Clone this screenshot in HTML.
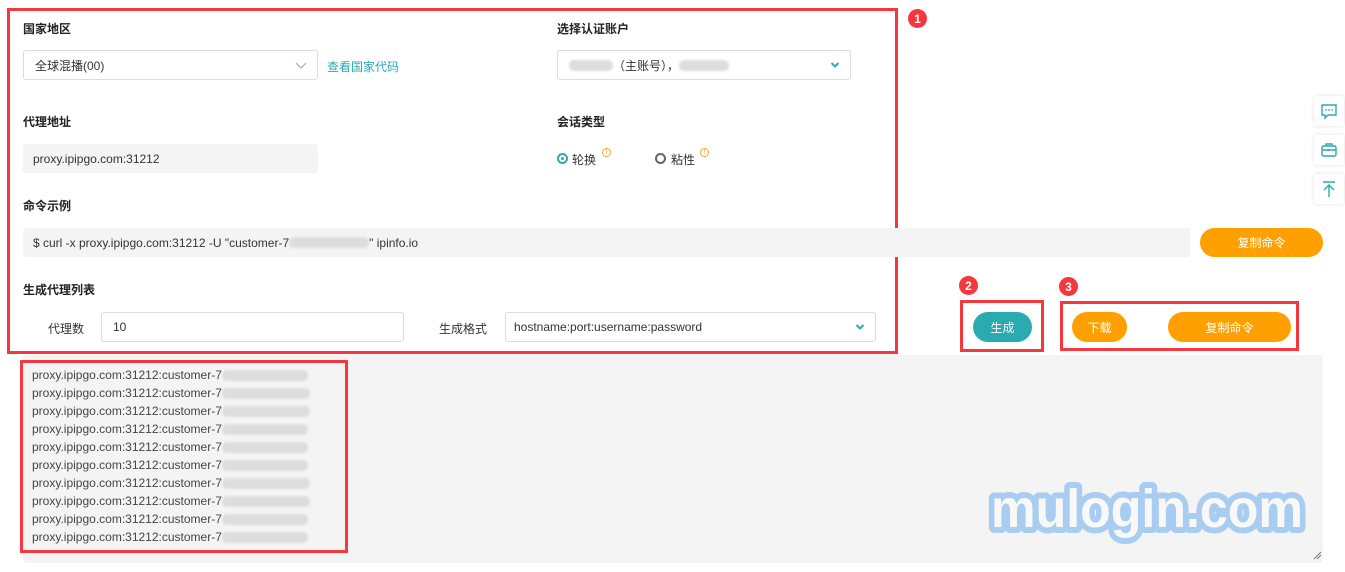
<!DOCTYPE html>
<html><head><meta charset="utf-8"><style>
*{box-sizing:border-box;margin:0;padding:0}
body{width:1345px;height:572px;background:#fff;position:relative;overflow:hidden;font-family:"Liberation Sans","Noto Sans CJK SC",sans-serif;font-size:12px;color:#333}
.a{position:absolute}
.lbl{font-weight:bold;font-size:12px;color:#222}
.field{border:1px solid #dcdcdc;border-radius:3px;background:#fff;display:flex;align-items:center;padding-left:11px}
.grey{background:#f4f4f4;border-radius:3px;display:flex;align-items:center;padding-left:10px}
.btn{border-radius:15px;color:#fff;display:flex;align-items:center;justify-content:center;font-size:12px}
.or{background:#ffa000}
.red{border:3px solid #f5383d}
.badge{width:19px;height:19px;border-radius:50%;background:#f5383d;color:#fff;font-size:12px;font-weight:bold;display:flex;align-items:center;justify-content:center}
.blur{display:inline-block;height:11px;background:#ddd;border-radius:5px;vertical-align:middle;filter:blur(1px)}
.side{left:1314px;width:30px;height:30px;background:#fff;border-radius:3px;box-shadow:0 0 4px rgba(0,0,0,.12);display:flex;align-items:center;justify-content:center}
.chev{position:absolute;right:10px;top:8px}
.line{height:18px;line-height:18px}
</style></head><body>
<div class="a red" style="left:7px;top:8px;width:891px;height:346px"></div>
<div class="a badge" style="left:908px;top:9px">1</div>

<div class="a lbl" style="left:23px;top:20px">国家地区</div>
<div class="a field" style="left:23px;top:50px;width:295px;height:30px">全球混播(00)
<svg class="chev" style="top:9px" width="12" height="10" viewBox="0 0 12 10"><path d="M1 3l5 5 5-5" fill="none" stroke="#aaa" stroke-width="1.2"/></svg></div>
<div class="a" style="left:327px;top:58px;color:#2aabb0">查看国家代码</div>

<div class="a lbl" style="left:557px;top:20px">选择认证账户</div>
<div class="a field" style="left:557px;top:50px;width:294px;height:30px"><span class="blur" style="width:44px"></span>（主账号），<span class="blur" style="width:50px"></span>
<svg class="chev" style="top:10px" width="10" height="8" viewBox="0 0 10 8"><path d="M1.5 2l3.5 3.5L8.5 2" fill="none" stroke="#2aabb0" stroke-width="2"/></svg></div>

<div class="a lbl" style="left:23px;top:113px">代理地址</div>
<div class="a grey" style="left:23px;top:144px;width:295px;height:29px">proxy.ipipgo.com:31212</div>

<div class="a lbl" style="left:557px;top:113px">会话类型</div>
<div class="a" style="left:557px;top:153px;width:11px;height:11px;border-radius:50%;border:2px solid #2aabb0;display:flex;align-items:center;justify-content:center"><div style="width:3px;height:3px;border-radius:50%;background:#2aabb0"></div></div>
<div class="a" style="left:572px;top:151px">轮换</div>
<div class="a" style="left:602px;top:148px;width:9px;height:9px;border-radius:50%;border:1px solid #f5a623;font-size:7px;color:#f5a623;text-align:center;line-height:7px">!</div>
<div class="a" style="left:655px;top:153px;width:11px;height:11px;border-radius:50%;border:2px solid #666"></div>
<div class="a" style="left:671px;top:151px">粘性</div>
<div class="a" style="left:700px;top:148px;width:9px;height:9px;border-radius:50%;border:1px solid #f5a623;font-size:7px;color:#f5a623;text-align:center;line-height:7px">!</div>

<div class="a lbl" style="left:23px;top:197px">命令示例</div>
<div class="a grey" style="left:23px;top:228px;width:1167px;height:29px">$ curl -x proxy.ipipgo.com:31212 -U "customer-7<span class="blur" style="width:80px;background:#ddd"></span>" ipinfo.io</div>
<div class="a btn or" style="left:1200px;top:228px;width:123px;height:29px">复制命令</div>

<div class="a lbl" style="left:23px;top:281px">生成代理列表</div>
<div class="a" style="left:48px;top:320px">代理数</div>
<div class="a field" style="left:101px;top:312px;width:303px;height:30px">10</div>
<div class="a" style="left:439px;top:320px">生成格式</div>
<div class="a field" style="left:505px;top:312px;width:371px;height:30px;padding-left:8px">hostname:port:username:password
<svg class="chev" style="top:10px" width="10" height="8" viewBox="0 0 10 8"><path d="M1.5 2l3.5 3.5L8.5 2" fill="none" stroke="#2aabb0" stroke-width="2"/></svg></div>

<div class="a badge" style="left:959px;top:276px">2</div>
<div class="a red" style="left:960px;top:300px;width:84px;height:52px"></div>
<div class="a btn" style="left:973px;top:312px;width:59px;height:30px;background:#2aabb0">生成</div>

<div class="a badge" style="left:1059px;top:277px">3</div>
<div class="a red" style="left:1060px;top:301px;width:239px;height:50px"></div>
<div class="a btn or" style="left:1072px;top:312px;width:55px;height:30px">下载</div>
<div class="a btn or" style="left:1168px;top:312px;width:123px;height:30px">复制命令</div>

<div class="a" style="left:23px;top:355px;width:1300px;height:208px;background:#f4f4f4;border-radius:4px"></div>
<svg class="a" style="left:1312px;top:550px" width="10" height="10"><path d="M2 9L9 2M5 9L9 5" stroke="#777" stroke-width="1"/></svg>
<div class="a red" style="left:20px;top:360px;width:328px;height:193px"></div>
<div class="a" style="left:32px;top:366px;color:#444">
<div class="line">proxy.ipipgo.com:31212:customer-7<span class="blur" style="width:86px"></span></div>
<div class="line">proxy.ipipgo.com:31212:customer-7<span class="blur" style="width:88px"></span></div>
<div class="line">proxy.ipipgo.com:31212:customer-7<span class="blur" style="width:88px"></span></div>
<div class="line">proxy.ipipgo.com:31212:customer-7<span class="blur" style="width:86px"></span></div>
<div class="line">proxy.ipipgo.com:31212:customer-7<span class="blur" style="width:86px"></span></div>
<div class="line">proxy.ipipgo.com:31212:customer-7<span class="blur" style="width:86px"></span></div>
<div class="line">proxy.ipipgo.com:31212:customer-7<span class="blur" style="width:88px"></span></div>
<div class="line">proxy.ipipgo.com:31212:customer-7<span class="blur" style="width:88px"></span></div>
<div class="line">proxy.ipipgo.com:31212:customer-7<span class="blur" style="width:86px"></span></div>
<div class="line">proxy.ipipgo.com:31212:customer-7<span class="blur" style="width:86px"></span></div>
</div>

<svg class="a" style="left:975px;top:465px" width="350" height="90"><text x="16" y="62" font-family="Liberation Sans,sans-serif" font-weight="bold" font-size="54" fill="#f8f8f8" stroke="#a8cdf0" stroke-width="12" stroke-linejoin="round" paint-order="stroke" textLength="312" lengthAdjust="spacingAndGlyphs">mulogin.com</text></svg>

<div class="a side" style="top:96px"><svg width="18" height="18" viewBox="0 0 18 18"><path d="M2 3h14v10H8l-3 3v-3H2z" fill="none" stroke="#2aabb0" stroke-width="1.4"/><circle cx="6" cy="8" r=".9" fill="#2aabb0"/><circle cx="9" cy="8" r=".9" fill="#2aabb0"/><circle cx="12" cy="8" r=".9" fill="#2aabb0"/></svg></div>
<div class="a side" style="top:135px"><svg width="18" height="18" viewBox="0 0 18 18"><rect x="2" y="5" width="14" height="10" rx="1.5" fill="none" stroke="#2aabb0" stroke-width="1.4"/><path d="M6 5V3h6v2M2 9h14M9 8v2" fill="none" stroke="#2aabb0" stroke-width="1.4"/></svg></div>
<div class="a side" style="top:174px"><svg width="18" height="18" viewBox="0 0 18 18"><path d="M3 2h12M9 5v12M4 10l5-5 5 5" fill="none" stroke="#2aabb0" stroke-width="1.4"/></svg></div>
</body></html>
